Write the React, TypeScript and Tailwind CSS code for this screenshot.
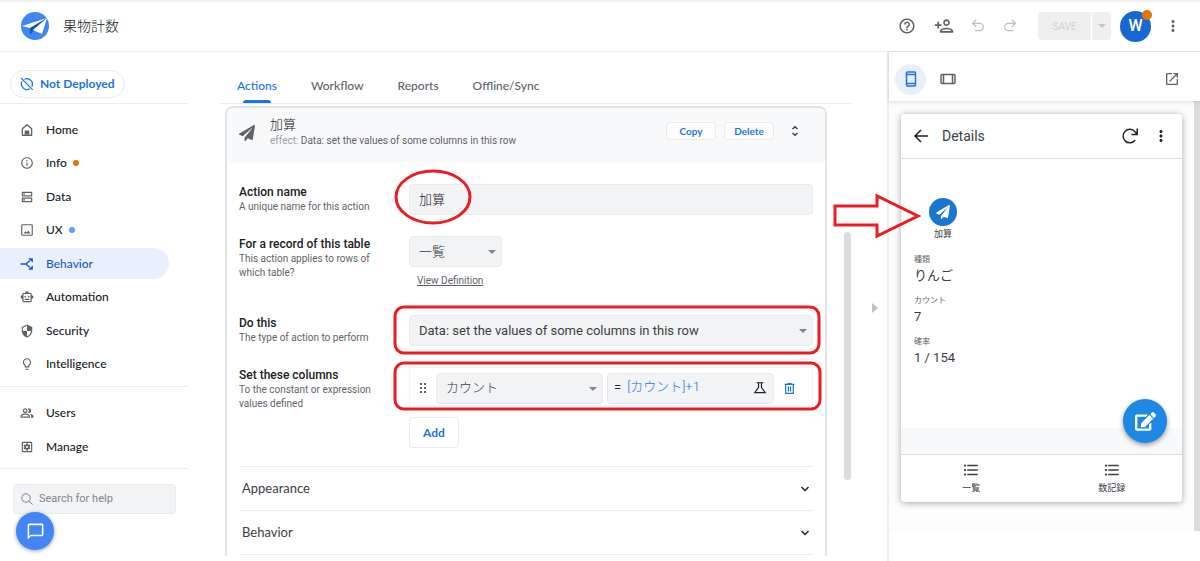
import { useState } from 'react'
import type { ReactNode } from 'react'
import clsx from 'clsx'
import {
  MdChatBubbleOutline,
  MdFormatListBulleted,
  MdHelpOutline,
  MdInfoOutline,
  MdMoreVert,
  MdOpenInNew,
  MdOutlineDns,
  MdOutlineLightbulb,
  MdOutlinePeopleAlt,
  MdOutlinePersonAdd,
  MdOutlineSettingsApplications,
  MdOutlineSmartToy,
  MdSecurity,
} from 'react-icons/md'
import { FaEdit, FaPaperPlane } from 'react-icons/fa'

const UI_FONT = 'font-[Lato,"Noto_Sans_CJK_JP",sans-serif]'

function HomeIcon() {
  return (
    <svg viewBox="0 0 24 24" className="size-[14px]" fill="none" stroke="currentColor" strokeWidth="2.2">
      <path d="M4 21V10l8-7 8 7v11z" strokeLinejoin="round" />
      <path d="M8 20v-7h8v7z" fill="currentColor" stroke="none" />
    </svg>
  )
}

function ImageIcon() {
  return (
    <svg viewBox="0 0 24 24" className="size-[14px]" fill="none" stroke="currentColor" strokeWidth="2">
      <rect x="3" y="3" width="18" height="18" rx="1.5" />
      <path d="M6 18l3.2-4 2.4 2.4L14.5 13 18 18z" fill="currentColor" stroke="none" />
    </svg>
  )
}

function BranchIcon() {
  return (
    <svg viewBox="0 0 24 24" className="size-[14px]" fill="none" stroke="currentColor" strokeWidth="2.3">
      <path d="M1 12h9l7-6M10 12l7 6" />
      <path d="M14 2h8v8z M14 22h8v-8z" fill="currentColor" stroke="none" />
    </svg>
  )
}

function NotDeployedIcon() {
  return (
    <svg viewBox="0 0 24 24" className="size-[14px]" fill="none" stroke="currentColor" strokeWidth="2.2">
      <path d="M7.5 3.8A9.5 9.5 0 0 1 20.2 16.5M16.8 20.2A9.5 9.5 0 0 1 3.8 7.2M2 2l20 20" />
    </svg>
  )
}

function Logo() {
  return (
    <svg viewBox="0 0 28 28" className="size-7" aria-hidden="true">
      <circle cx="14" cy="14" r="14" fill="#4285f4" />
      <path d="M1 14L26 6 9 16z" fill="#fff" />
      <path d="M26 6L9 16v7l3-4z" fill="#1a56b0" />
      <path d="M26 6L12 18l9 4z" fill="#fff" />
    </svg>
  )
}

function UndoIcon({ flip }: { flip?: boolean }) {
  return (
    <svg
      viewBox="0 0 24 24"
      className={clsx('size-4', flip && '-scale-x-100')}
      fill="none"
      stroke="currentColor"
      strokeWidth="2"
    >
      <path d="M9 3L4 8l5 5M4 8h10.5a5.5 5.5 0 0 1 0 11H7" />
    </svg>
  )
}

function DeviceIcon({ landscape }: { landscape?: boolean }) {
  return (
    <svg
      viewBox="0 0 16 16"
      className={clsx('size-4', landscape && 'rotate-90')}
      fill="none"
      stroke="currentColor"
      strokeWidth="1.5"
    >
      <rect x="3.5" y="1" width="9" height="14" rx="1" />
      <path d="M3.5 3.5h9M3.5 12.5h9" />
    </svg>
  )
}

function FlaskIcon() {
  return (
    <svg viewBox="0 0 24 24" className="size-[14px]" fill="none" stroke="currentColor" strokeWidth="2">
      <path d="M6 3h12M9.500 3v8L3 20h18L14.500 11V3" />
    </svg>
  )
}

function TrashIcon() {
  return (
    <svg viewBox="0 0 24 24" className="size-[13px]" fill="none" stroke="currentColor" strokeWidth="2.2">
      <path d="M3 4.5h18M8 3h8M5 5v16h14V5M10 8.500v9M14 8.500v9" />
    </svg>
  )
}

function Caret({ className }: { className?: string }) {
  return (
    <svg viewBox="0 0 8 4" className={clsx('pointer-events-none h-1 w-2 fill-current', className)}>
      <path d="M0 0h8L4 4z" />
    </svg>
  )
}

function Chevron() {
  return (
    <svg viewBox="0 0 10 10" className="size-[10px]" fill="none" stroke="#202124" strokeWidth="1.5">
      <path d="M1.500 3L5 6.500 8.500 3" />
    </svg>
  )
}

type NavEntry = { label: string; icon: ReactNode; dot?: string }

const mainNav: NavEntry[] = [
  { label: 'Home',         icon: <HomeIcon /> },
  { label: 'Info',         icon: <MdInfoOutline size={14} />, dot: 'bg-[#e37400]' },
  { label: 'Data',         icon: <MdOutlineDns size={14} /> },
  { label: 'UX',           icon: <ImageIcon />, dot: 'bg-[#669df6]' },
  { label: 'Behavior',     icon: <BranchIcon /> },
  { label: 'Automation',   icon: <MdOutlineSmartToy size={14} /> },
  { label: 'Security',     icon: <MdSecurity size={14} /> },
  { label: 'Intelligence', icon: <MdOutlineLightbulb size={14} /> },
]

const adminNav: NavEntry[] = [
  { label: 'Users',  icon: <MdOutlinePeopleAlt size={14} /> },
  { label: 'Manage', icon: <MdOutlineSettingsApplications size={14} /> },
]

function NavLink({ item, active }: { item: NavEntry; active?: boolean }) {
  return (
    <a
      href="#"
      className={clsx(
        'flex h-[31px] items-center rounded-r-full pl-5 text-xs font-medium',
        active ? 'bg-[#e8f0fe] text-[#185abc]' : 'text-[#202124]',
      )}
    >
      <span className={clsx('mr-3 flex w-[14px] justify-center', !active && 'text-[#5f6368]')}>{item.icon}</span>
      {item.label}
      {item.dot && <span className={clsx('ml-[6px] size-[6px] rounded-full', item.dot)} />}
    </a>
  )
}

function Header() {
  return (
    <header className="flex h-[52px] shrink-0 items-center border-t-2 border-b border-t-[#f1f1f1] border-b-[#e8eaed] pr-[18px] pb-px pl-[21px] text-[#5f6368]">
      <Logo />
      <h1 className="ml-[14px] text-sm font-light text-[#202124]">果物計数</h1>
      <div className="ml-auto flex items-center">
        <button aria-label="Help"><MdHelpOutline size={18} /></button>
        <button aria-label="Share" className="ml-[18px]"><MdOutlinePersonAdd size={20} /></button>
        <button aria-label="Undo" className="ml-4 text-[#bdc1c6]"><UndoIcon /></button>
        <button aria-label="Redo" className="ml-4 text-[#bdc1c6]"><UndoIcon flip /></button>
        <div className="ml-5 flex h-7 overflow-hidden rounded bg-[#efefef] text-[#d0d2d5]">
          <button className="w-[53px] text-[10px]">SAVE</button>
          <button aria-label="Save options" className="flex w-5 items-center justify-center border-l border-white text-[#c4c7ca]">
            <Caret />
          </button>
        </div>
        <button className="relative ml-[9px] size-[31px] rounded-full bg-[#1967d2] text-base font-medium text-white">
          W
          <span className="absolute -top-px -right-px size-[10px] rounded-full bg-[#e37400]" />
        </button>
        <button aria-label="More" className="ml-[13px]"><MdMoreVert size={18} /></button>
      </div>
    </header>
  )
}

function Sidebar() {
  return (
    <aside className={`relative w-[188px] shrink-0 pt-[18px] ${UI_FONT}`}>
      <button className="ml-[10px] flex h-7 items-center gap-[6px] rounded-full border border-[#e8eaed] px-[9px] text-xs font-bold text-[#1a73e8]">
        <NotDeployedIcon />
        Not Deployed
      </button>
      <nav className="mt-[5px] border-t border-[#e8eaed] pt-[10px]">
        <div className="mr-[19px] flex h-[266px] flex-col justify-between">
          {mainNav.map((item) => (
            <NavLink key={item.label} item={item} active={item.label === 'Behavior'} />
          ))}
        </div>
        <div className="mt-[6px] flex flex-col gap-[3px] border-y border-[#e8eaed] pt-[10px] pb-[6px]">
          {adminNav.map((item) => (
            <NavLink key={item.label} item={item} />
          ))}
        </div>
      </nav>
      <label className="mt-[15px] mr-3 ml-[13px] flex h-[30px] items-center gap-[6px] rounded-sm border border-[#e8eaed] bg-[#f1f3f4] px-[7px] text-[#80868b]">
        <svg viewBox="0 0 24 24" className="size-3 shrink-0" fill="none" stroke="currentColor" strokeWidth="2">
          <circle cx="10" cy="10" r="8.5" />
          <path d="M16 16l7 7" />
        </svg>
        <input
          aria-label="Search for help"
          placeholder="Search for help"
          className="w-full min-w-0 bg-transparent font-[Roboto,sans-serif] text-[11px] outline-none placeholder:text-[#80868b]"
        />
      </label>
      <button
        aria-label="Chat"
        className="absolute top-[460px] left-4 flex size-[38px] items-center justify-center rounded-full bg-[#4285f4] text-white shadow-[0_1px_4px_rgba(0,0,0,0.4)]"
      >
        <MdChatBubbleOutline size={19} />
      </button>
    </aside>
  )
}

const tabs = ['Actions', 'Workflow', 'Reports', 'Offline/Sync']

function Tabs() {
  return (
    <div role="tablist" className={`flex h-[52px] shrink-0 gap-[34px] border-b border-[#e8eaed] pl-[17px] text-xs font-medium ${UI_FONT}`}>
      {tabs.map((tab, i) => (
        <button
          key={tab}
          role="tab"
          aria-selected={i === 0}
          className={clsx('relative pt-4', i === 0 ? 'text-[#1a73e8]' : 'text-[#5f6368]')}
        >
          {tab}
          {i === 0 && <span className="absolute inset-x-[6px] bottom-0 h-[3px] rounded-t-sm bg-[#1a73e8]" />}
        </button>
      ))}
    </div>
  )
}

type FieldProps = { id: string; title: string; hint: string; className?: string; children: ReactNode }

function Field({ id, title, hint, className, children }: FieldProps) {
  return (
    <div className={clsx('grid grid-cols-[170px_minmax(0,1fr)]', className)}>
      <label htmlFor={id} className="pr-7">
        <span className="block text-xs leading-4 font-medium text-[#202124]">{title}</span>
        <span className="block text-[10px] leading-[14px] text-[#5f6368]">{hint}</span>
      </label>
      <div>{children}</div>
    </div>
  )
}

function Select({ id, value, className }: { id: string; value: string; className?: string }) {
  return (
    <div className={clsx('relative text-[13px] text-[#3c4043]', className)}>
      <select
        id={id}
        className="h-[31px] w-full appearance-none rounded-sm border border-[#e8eaed] bg-[#f1f3f4] px-[9px]"
      >
        <option>{value}</option>
      </select>
      <Caret className="absolute top-[14px] right-[6px] text-[#80868b]" />
    </div>
  )
}

function ActionCard() {
  const [name, setName] = useState('加算')
  const [expr, setExpr] = useState('[カウント]+1')

  return (
    <section className="mt-[2px] flex-1 rounded-t-lg border-2 border-b-0 border-[#e1e3e6]">
      <div className="flex h-[55px] items-start rounded-t-md bg-[#f8f9fb] px-3 pt-[9px]">
        <FaPaperPlane size={16} className="mt-2 text-[#5f6368]" />
        <div className="ml-[15px]">
          <h2 className="text-[13px] leading-4 font-light text-[#202124]">加算</h2>
          <p className="text-[10px] leading-4 text-[#5f6368]">
            <span className="text-[#9aa0a6]">effect:</span> Data: set the values of some columns in this row
          </p>
        </div>
        <div className={`mt-[5px] ml-auto flex items-center gap-2 text-[10px] font-bold text-[#1a73e8] ${UI_FONT}`}>
          <button className="h-[18px] w-[50px] rounded-sm border border-[#e8eaed] bg-white">Copy</button>
          <button className="h-[18px] w-[50px] rounded-sm border border-[#e8eaed] bg-white">Delete</button>
          <button aria-label="Collapse action" className="mr-[13px] ml-2">
            <svg viewBox="0 0 10 12" className="h-3 w-[10px]" fill="none" stroke="#3c4043" strokeWidth="1.5">
              <path d="M2.500 4L5 1.800 7.500 4M2.500 8L5 10.200 7.500 8" />
            </svg>
          </button>
        </div>
      </div>

      <div className="px-3 pt-[21px]">
        <Field id="action-name" title="Action name" hint="A unique name for this action">
          <input
            id="action-name"
            value={name}
            onChange={(e) => setName(e.target.value)}
            className="block h-[31px] w-full rounded-sm border border-[#e8eaed] bg-[#f1f3f4] px-[9px] pb-[3px] text-[13px] font-light text-[#202124]"
          />
        </Field>

        <Field
          id="table"
          title="For a record of this table"
          hint="This action applies to rows of which table?"
          className="mt-[21px]"
        >
          <Select id="table" value="一覧" className="w-[93px] font-light" />
          <a href="#" className="mt-[5px] ml-2 inline-block text-[10px] leading-4 text-[#5f6368] underline">
            View Definition
          </a>
        </Field>

        <Field id="effect" title="Do this" hint="The type of action to perform" className="mt-6">
          <Select id="effect" value="Data: set the values of some columns in this row" />
        </Field>

        <Field id="column" title="Set these columns" hint="To the constant or expression values defined" className="mt-[21px]">
          <div className="flex h-[42px] items-center border border-[#f1f3f4] pl-[9px]">
            <svg viewBox="0 0 8 12" className="h-3 w-2 shrink-0 fill-[#5f6368]" aria-hidden="true">
              <path d="M1 1h2v2H1zM5 1h2v2H5zM1 5h2v2H1zM5 5h2v2H5zM1 9h2v2H1zM5 9h2v2H5z" />
            </svg>
            <div className="ml-[9px] grid flex-1 grid-cols-2 gap-1">
              <Select id="column" value="カウント" className="font-light" />
              <div className="flex h-[31px] items-center rounded-sm border border-[#e8eaed] bg-[#f1f3f4] px-[6px] text-[13px] text-[#202124]">
                =
                <input
                  aria-label="Expression"
                  value={expr}
                  onChange={(e) => setExpr(e.target.value)}
                  className="ml-[6px] w-full min-w-0 bg-transparent pb-[2px] font-light text-[#1a73e8]"
                />
                <button aria-label="Test expression"><FlaskIcon /></button>
              </div>
            </div>
            <button aria-label="Remove column" className="mr-4 ml-[9px] text-[#1a73e8]"><TrashIcon /></button>
          </div>
          <button className={`mt-2 block h-[31px] w-[50px] rounded-sm border border-[#e8eaed] text-xs font-bold text-[#1a73e8] ${UI_FONT}`}>
            Add
          </button>
        </Field>

        <div className="mt-[18px] border-b border-[#e8eaed]">
          {['Appearance', 'Behavior'].map((name) => (
            <button
              key={name}
              className={`flex h-[44px] w-full items-center justify-between border-t border-[#e8eaed] px-[3px] text-[13px] text-[#3c4043] ${UI_FONT}`}
            >
              {name}
              <Chevron />
            </button>
          ))}
        </div>
      </div>
    </section>
  )
}

const record = [
  { label: '種類',     value: 'りんご' },
  { label: 'カウント', value: '7' },
  { label: '確率',     value: '1 / 154' },
]

function Phone() {
  return (
    <div className="relative flex h-[388px] flex-col rounded bg-white text-[#3c4043] shadow-[0_1px_7px_rgba(0,0,0,0.35)]">
      <div className="flex h-[45px] items-center border-b border-[#e0e0e0] px-3 text-[#202124]">
        <button aria-label="Back">
          <svg viewBox="0 0 16 16" className="size-4" fill="none" stroke="currentColor" strokeWidth="1.5">
            <path d="M15 8H2M8 2L2 8l6 6" />
          </svg>
        </button>
        <h2 className="ml-[13px] text-sm text-[#3c4043]">Details</h2>
        <button aria-label="Sync" className="ml-auto">
          <svg viewBox="0 0 16 16" className="size-4" fill="none" stroke="currentColor" strokeWidth="1.5">
            <path d="M13.200 12A6.700 6.700 0 1 1 13 3.800L15 6M15.200 0.500v6H9.500" />
          </svg>
        </button>
        <button aria-label="Menu" className="ml-[14px]"><MdMoreVert size={18} /></button>
      </div>
      <div className="flex-1 px-3 pt-[39px]">
        <button className="ml-4 flex w-7 flex-col items-center text-[9px] leading-4">
          <span className="flex size-7 items-center justify-center rounded-full bg-[#1976d2] text-white">
            <FaPaperPlane size={14} />
          </span>
          加算
        </button>
        <dl className="mt-[11px] flex flex-col gap-[10px] pl-px">
          {record.map((r) => (
            <div key={r.label}>
              <dt className="text-[8px] leading-[14px] text-[#5f6368]">{r.label}</dt>
              <dd className="text-[13px] leading-[17px]">{r.value}</dd>
            </div>
          ))}
        </dl>
      </div>
      <div className="h-[27px] border-b border-[#dadce0] bg-[#f8f9fb]" />
      <nav className="flex h-[47px] text-[9px] leading-[14px]">
        {['一覧', '数記録'].map((view) => (
          <button key={view} className="flex flex-1 flex-col items-center pt-[6px]">
            <MdFormatListBulleted size={18} />
            <span className="mt-[2px]">{view}</span>
          </button>
        ))}
      </nav>
      <button
        aria-label="Edit"
        className="absolute right-[15px] bottom-[59px] flex size-11 items-center justify-center rounded-full bg-[#1e88e5] text-white shadow-[0_2px_5px_rgba(0,0,0,0.4)]"
      >
        <FaEdit size={21} />
      </button>
    </div>
  )
}

function Preview() {
  return (
    <aside className="w-[313px] shrink-0 border-l-2 border-[#eceef0]">
      <div className="relative flex h-[49px] items-center pt-[5px] pr-5 pl-[6px] text-[#5f6368] shadow-[0_1px_4px_rgba(0,0,0,0.15)]">
        <button aria-label="Phone view" className="flex size-[31px] items-center justify-center rounded-full bg-[#e8f0fe] text-[#1a73e8]">
          <DeviceIcon />
        </button>
        <button aria-label="Tablet view" className="ml-[14px]"><DeviceIcon landscape /></button>
        <button aria-label="Open in new window" className="ml-auto"><MdOpenInNew size={16} /></button>
      </div>
      <div className="flex">
        <div className="min-w-0 flex-1 overflow-hidden bg-[#fdfdfd] pt-[13px] pr-3 pb-[9px] pl-3">
          <Phone />
        </div>
        <div className="h-[430px] w-[6px] bg-[#dadce0]" />
      </div>
    </aside>
  )
}

// red callouts that lie over the editor
function Callouts() {
  return (
    <svg
      width="1200"
      height="561"
      className="pointer-events-none absolute top-0 left-0"
      fill="none"
      stroke="#ed1c24"
      strokeWidth="3"
      aria-hidden="true"
    >
      <ellipse cx="433" cy="197" rx="37" ry="26" />
      <rect x="395" y="307" width="424" height="46" rx="9" />
      <rect x="395" y="363" width="425" height="46" rx="9" />
      <path d="M835 206h42v-10l41 20-41 20v-11h-42z" />
    </svg>
  )
}

export default function App() {
  return (
    <div className='relative flex h-screen flex-col overflow-hidden bg-white font-[Roboto,"Noto_Sans_CJK_JP",sans-serif]'>
      <Header />
      <div className="flex min-h-0 flex-1">
        <Sidebar />
        <main className="mb-[5px] ml-8 flex min-w-0 flex-1 flex-col overflow-hidden">
          <div className="mr-9">
            <Tabs />
          </div>
          <div className="flex min-h-0 flex-1">
            <div className="ml-[5px] flex min-w-0 flex-1">
              <ActionCard />
            </div>
            <div className="mt-32 mr-[21px] ml-[17px] h-[248px] w-[7px] rounded-full bg-[#dadce0]" />
            <button aria-label="Collapse preview" className="mt-[199px] mr-[9px] h-[10px]">
              <svg viewBox="0 0 6 10" className="h-[10px] w-[6px] fill-[#bdc1c6]">
                <path d="M0 0l6 5-6 5z" />
              </svg>
            </button>
          </div>
        </main>
        <Preview />
      </div>
      <Callouts />
    </div>
  )
}
